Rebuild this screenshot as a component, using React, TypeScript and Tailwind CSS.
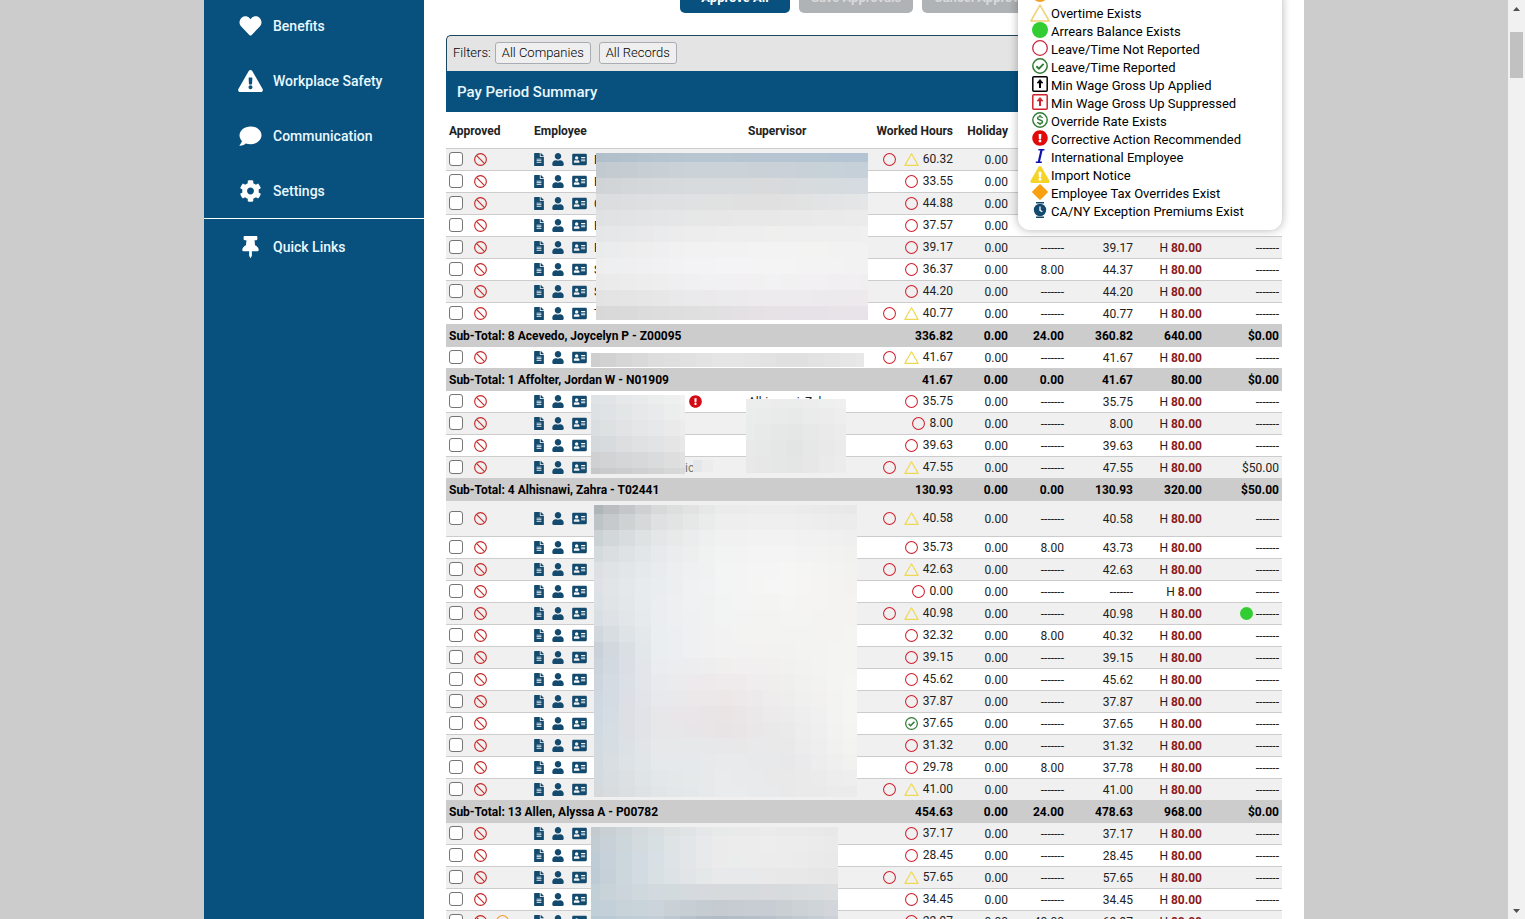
import type { ReactNode } from "react";
import clsx from "clsx";
import {
  FaAddressCard,
  FaCog,
  FaComment,
  FaExclamationCircle,
  FaExclamationTriangle,
  FaFileAlt,
  FaHeart,
  FaThumbtack,
  FaUser,
} from "react-icons/fa";

type Entry = {
  kind: "entry";
  hours: string;
  icons?: "O" | "OT" | "V";
  leave?: string;
  total?: string;
  salary?: string;
  balance?: string;
  arrears?: boolean;
  corrective?: boolean;
  held?: boolean;
  tall?: boolean;
  name?: string;
  nameEnd?: string;
  supervisor?: string;
};

type Subtotal = { kind: "subtotal"; label: string; values: string[] };

const NONE = "-------";
const blank = { leave: "", total: "", salary: "", balance: "" };

const entry = (hours: string, rest: Partial<Entry> = {}): Entry => ({
  kind: "entry",
  hours,
  ...rest,
});

const subtotal = (label: string, ...values: string[]): Subtotal => ({
  kind: "subtotal",
  label,
  values,
});

const rows: (Entry | Subtotal)[] = [
  entry("60.32", { icons: "OT", name: "D", ...blank }),
  entry("33.55", { name: "F", ...blank }),
  entry("44.88", { name: "C", ...blank }),
  entry("37.57", { name: "F", ...blank }),
  entry("39.17", { name: "F" }),
  entry("36.37", { leave: "8.00", total: "44.37", name: "S" }),
  entry("44.20", { name: "S" }),
  entry("40.77", { icons: "OT", name: "T" }),
  subtotal("Sub-Total: 8 Acevedo, Joycelyn P - Z00095", "336.82", "0.00", "24.00", "360.82", "640.00", "$0.00"),
  entry("41.67", { icons: "OT" }),
  subtotal("Sub-Total: 1 Affolter, Jordan W - N01909", "41.67", "0.00", "0.00", "41.67", "80.00", "$0.00"),
  entry("35.75", { corrective: true, supervisor: "Alhisnawi, Zahra" }),
  entry("8.00"),
  entry("39.63"),
  entry("47.55", { icons: "OT", balance: "$50.00", nameEnd: "ic" }),
  subtotal("Sub-Total: 4 Alhisnawi, Zahra - T02441", "130.93", "0.00", "0.00", "130.93", "320.00", "$50.00"),
  entry("40.58", { icons: "OT", tall: true }),
  entry("35.73", { leave: "8.00", total: "43.73" }),
  entry("42.63", { icons: "OT" }),
  entry("0.00", { total: NONE, salary: "8.00" }),
  entry("40.98", { icons: "OT", arrears: true }),
  entry("32.32", { leave: "8.00", total: "40.32" }),
  entry("39.15"),
  entry("45.62"),
  entry("37.87"),
  entry("37.65", { icons: "V" }),
  entry("31.32"),
  entry("29.78", { leave: "8.00", total: "37.78" }),
  entry("41.00", { icons: "OT" }),
  subtotal("Sub-Total: 13 Allen, Alyssa A - P00782", "454.63", "0.00", "24.00", "478.63", "968.00", "$0.00"),
  entry("37.17"),
  entry("28.45"),
  entry("57.65", { icons: "OT" }),
  entry("34.45"),
  entry("22.97", { leave: "40.00", total: "62.97", held: true }),
];

const Ring = ({ className }: { className?: string }) => (
  <svg viewBox="0 0 16 16" fill="none" stroke="currentColor" className={className}>
    <circle cx="8" cy="8" r="7.3" strokeWidth="1.3" />
  </svg>
);

const Dot = ({ className }: { className?: string }) => (
  <svg viewBox="0 0 16 16" fill="currentColor" className={className}>
    <circle cx="8" cy="8" r="8" />
  </svg>
);

const Ban = ({ className }: { className?: string }) => (
  <svg viewBox="0 0 16 16" fill="none" stroke="currentColor" strokeWidth="1.4" className={className}>
    <circle cx="8" cy="8" r="7.2" />
    <path d="M3 3l10 10" />
  </svg>
);

const Warn = ({ className }: { className?: string }) => (
  <svg viewBox="0 0 18 16" fill="none" stroke="currentColor" strokeWidth="1.4" strokeLinejoin="round" className={className}>
    <path d="M9 1L17.200 15.200H.8z" />
  </svg>
);

const Check = ({ className }: { className?: string }) => (
  <svg viewBox="0 0 16 16" fill="none" stroke="currentColor" strokeWidth="1.5" className={className}>
    <circle cx="8" cy="8" r="7.2" />
    <path d="M4.4 8.3l2.5 2.4 4.7-4.8" strokeWidth="1.9" />
  </svg>
);

const BoxUp = ({ className }: { className?: string }) => (
  <svg viewBox="0 0 16 16" fill="none" stroke="currentColor" strokeWidth="1.5" className={className}>
    <rect x="0.8" y="0.8" width="14.4" height="14.4" rx="1" />
    <path d="M8 12V5" strokeWidth="2" />
    <path d="M8 3.4L11 7H5z" fill="currentColor" strokeWidth="0.6" />
  </svg>
);

const Dollar = ({ className }: { className?: string }) => (
  <svg viewBox="0 0 16 16" fill="none" stroke="currentColor" strokeWidth="1.4" className={className}>
    <circle cx="8" cy="8" r="7.2" />
    <path d="M10.4 6C10 5 9.200 4.600 8 4.600c-1.400 0-2.400.6-2.400 1.700 0 2.400 4.900 1 4.900 3.500 0 1.100-1.100 1.700-2.500 1.700-1.300 0-2.200-.5-2.600-1.500M8 3v1.600M8 11.500V13" />
  </svg>
);

const Letter = ({ className }: { className?: string }) => (
  <svg viewBox="0 0 16 16" fill="none" stroke="currentColor" className={className}>
    <path d="M9.600 1.800L6.800 14" strokeWidth="2.200" />
    <path d="M6.400 1.700h6M3.800 14.200h6" strokeWidth="1.400" />
  </svg>
);

const Diamond = ({ className }: { className?: string }) => (
  <svg viewBox="0 0 16 16" fill="currentColor" className={className}>
    <path d="M7.300.5a1 1 0 0 1 1.400 0l6.800 6.800a1 1 0 0 1 0 1.400l-6.800 6.800a1 1 0 0 1-1.400 0L.5 8.700a1 1 0 0 1 0-1.400z" />
  </svg>
);

const Watch = ({ className }: { className?: string }) => (
  <svg viewBox="0 0 16 16" className={className}>
    <path d="M4 0h8v1.400H4zM4 14.600h8V16H4z" fill="currentColor" />
    <circle cx="8" cy="8" r="6.200" fill="currentColor" />
    <path d="M8 4.600V8.300l2.300 1.400" fill="none" stroke="#fff" strokeWidth="1.300" />
  </svg>
);

const legend: { icon: ReactNode; text: string }[] = [
  { icon: <Dot className="size-4 text-[#f0a028]" />, text: "" },
  { icon: <Warn className="h-[18px] w-5 text-[#f0d078]" />, text: "Overtime Exists" },
  { icon: <Dot className="size-4 text-[#32cd32]" />, text: "Arrears Balance Exists" },
  { icon: <Ring className="size-4 text-[#c8283c]" />, text: "Leave/Time Not Reported" },
  { icon: <Check className="size-4 text-[#2e7d32]" />, text: "Leave/Time Reported" },
  { icon: <BoxUp className="size-4 text-black" />, text: "Min Wage Gross Up Applied" },
  { icon: <BoxUp className="size-4 text-[#d0202e]" />, text: "Min Wage Gross Up Suppressed" },
  { icon: <Dollar className="size-4 text-[#2e7d32]" />, text: "Override Rate Exists" },
  { icon: <FaExclamationCircle className="size-4 text-[#e00a0a]" />, text: "Corrective Action Recommended" },
  { icon: <Letter className="size-4 text-[#1010b0]" />, text: "International Employee" },
  { icon: <FaExclamationTriangle className="h-[17px] w-5 text-[#f5d327]" />, text: "Import Notice" },
  { icon: <Diamond className="size-4 text-[#f9a011]" />, text: "Employee Tax Overrides Exist" },
  { icon: <Watch className="size-4 text-[#134a6e]" />, text: "CA/NY Exception Premiums Exist" },
];

const hex = (color: string) => [1, 3, 5].map((i) => parseInt(color.slice(i, i + 2), 16));

// Pixelated cover, blended between the colours of a coarse grid
const Mosaic = ({
  width,
  height,
  colors,
  className,
}: {
  width: number;
  height: number;
  colors: string[][];
  className: string;
}) => {
  const cell = 16;
  const shift = 7;
  const cols = Math.ceil((width + shift) / cell);
  const lines = Math.ceil((height + shift) / cell);
  const pick = (x: number, y: number) => {
    const gx = cols > 1 ? (x / (cols - 1)) * (colors[0].length - 1) : 0;
    const gy = lines > 1 ? (y / (lines - 1)) * (colors.length - 1) : 0;
    const x0 = Math.floor(gx);
    const y0 = Math.floor(gy);
    const x1 = Math.min(x0 + 1, colors[0].length - 1);
    const y1 = Math.min(y0 + 1, colors.length - 1);
    const [a, b, c, d] = [colors[y0][x0], colors[y0][x1], colors[y1][x0], colors[y1][x1]].map(hex);
    const mix = a.map((_, i) => {
      const top = a[i] + (b[i] - a[i]) * (gx - x0);
      const bottom = c[i] + (d[i] - c[i]) * (gx - x0);
      return Math.round(top + (bottom - top) * (gy - y0));
    });
    return `rgb(${mix.join(",")})`;
  };

  return (
    <svg
      aria-hidden="true"
      width={width}
      height={height}
      shapeRendering="crispEdges"
      className={clsx("absolute", className)}
    >
      {Array.from({ length: cols * lines }, (_, i) => {
        const x = i % cols;
        const y = Math.floor(i / cols);
        return (
          <rect key={i} x={x * cell - shift} y={y * cell - shift} width={cell} height={cell} fill={pick(x, y)} />
        );
      })}
    </svg>
  );
};

const NavItem = ({ icon, children }: { icon: ReactNode; children: ReactNode }) => (
  <a href="#" className="flex h-[55px] items-center gap-[10px] pl-[34px] text-sm font-medium text-[#e8f8ff]">
    {icon}
    {children}
  </a>
);

const Sidebar = () => (
  <nav className="-mt-0.5 w-[220px] shrink-0 bg-[#08507d]">
    <NavItem icon={<FaHeart className="h-[22px] w-[25px] text-white" />}>Benefits</NavItem>
    <NavItem icon={<FaExclamationTriangle className="h-[22px] w-[25px] text-white" />}>Workplace Safety</NavItem>
    <NavItem icon={<FaComment className="h-[22px] w-[25px] text-white" />}>Communication</NavItem>
    <NavItem icon={<FaCog className="h-[22px] w-[25px] text-white" />}>Settings</NavItem>
    <div className="border-t border-white">
      <NavItem icon={<FaThumbtack className="h-[22px] w-[25px] text-white" />}>Quick Links</NavItem>
    </div>
  </nav>
);

const Legend = () => (
  <aside className="absolute -top-[13px] right-[22px] w-[264px] rounded-xl bg-white pb-[9px] pl-3 shadow-[0_0_10px_rgba(0,0,0,0.3)]">
    <ul>
      {legend.map(({ icon, text }, i) => (
        <li key={i} className="flex h-[18px] gap-px text-[13px] leading-[18px] text-black">
          <span className="-mt-px flex w-5 shrink-0 items-start justify-center">{icon}</span>
          {text}
        </li>
      ))}
    </ul>
  </aside>
);

const cellClass = "border-t border-[#ccc] px-[3px] py-0 leading-4";

const EntryRow = ({ row, index }: { row: Entry; index: number }) => {
  const icons = row.icons ?? "O";
  const salary = row.salary ?? "80.00";
  return (
    <tr className={clsx("text-right", row.tall ? "h-9" : "h-[22px]", index % 2 === 0 ? "bg-[#f0f0f0]" : "bg-white")}>
      <td className={cellClass}>
        <div className="flex items-center">
          <input
            type="checkbox"
            aria-label={`Approve row ${index + 1}`}
            className="mb-0.5 size-3.5 appearance-none rounded-[3px] border border-[#767676] bg-white"
          />
          <Ban className="ml-[11px] size-[13px] text-[#c62828]" />
          {row.held && <Ring className="ml-[9px] size-[13px] text-[#f0a028]" />}
        </div>
      </td>
      <td className={cellClass}>
        <div className="flex items-center text-[#134a6e]">
          <FaFileAlt className="h-[13px] w-[10px]" />
          <FaUser className="ml-2 h-[13px] w-3" />
          <FaAddressCard className="ml-2 h-[13px] w-[15px]" />
          {row.name && <span className="ml-[7px] text-[#222]">{row.name}</span>}
          {row.nameEnd && <span className="ml-[98px] text-[#777]">{row.nameEnd}</span>}
          {row.corrective && <FaExclamationCircle className="ml-[102px] size-[13px] text-[#d50a14]" />}
        </div>
      </td>
      <td className={clsx(cellClass, "text-left")}>{row.supervisor}</td>
      <td className={cellClass}>
        <div className="flex items-center justify-end">
          {icons !== "V" && <Ring className="h-[13px] w-[15px] text-[#d0202e]" />}
          {icons === "OT" && <Warn className="ml-[7px] h-[13px] w-[15px] text-[#f0d84e]" />}
          {icons === "V" && <Check className="h-[13px] w-[15px] text-[#2e7d32]" />}
          <span className="mb-0.5 ml-1">{row.hours}</span>
        </div>
      </td>
      <td className={cellClass}>0.00</td>
      <td className={cellClass}>{row.leave ?? NONE}</td>
      <td className={cellClass}>{row.total ?? row.hours}</td>
      <td className={cellClass}>
        {salary && (
          <>
            H <b className="font-bold text-[#8b1a1a]">{salary}</b>
          </>
        )}
      </td>
      <td className={cellClass}>
        <div className="flex items-center justify-end gap-[3px]">
          {row.arrears && <Dot className="size-[13px] text-[#32cd32]" />}
          {row.balance ?? NONE}
        </div>
      </td>
    </tr>
  );
};

const SubtotalRow = ({ row }: { row: Subtotal }) => (
  <tr className="h-[22px] bg-[#ccc] text-right font-bold text-black">
    <td colSpan={3} className={clsx(cellClass, "text-left")}>
      {row.label}
    </td>
    {row.values.map((value, i) => (
      <td key={i} className={cellClass}>
        {value}
      </td>
    ))}
  </tr>
);

const SummaryTable = () => (
  <div className="relative">
    <table className="w-full table-fixed border-separate border-spacing-0 text-xs text-[#222]">
      <colgroup>
        <col className="w-[85px]" />
        <col />
        <col className="w-[115px]" />
        <col className="w-[96px]" />
        <col className="w-[55px]" />
        <col className="w-[56px]" />
        <col className="w-[69px]" />
        <col className="w-[69px]" />
        <col className="w-[77px]" />
      </colgroup>
      <thead>
        <tr className="h-9 text-left whitespace-nowrap">
          <th className="px-[3px] pt-0.5">Approved</th>
          <th className="px-[3px] pt-0.5">Employee</th>
          <th className="px-[3px] pt-0.5">Supervisor</th>
          <th className="px-[3px] pt-0.5 text-right">Worked Hours</th>
          <th className="px-[3px] pt-0.5 text-right">Holiday</th>
          <th colSpan={4} />
        </tr>
      </thead>
      <tbody>
        {rows.map((row, i) =>
          row.kind === "entry" ? <EntryRow key={i} row={row} index={i} /> : <SubtotalRow key={i} row={row} />,
        )}
      </tbody>
    </table>

    <Mosaic
      className="top-[41px] left-[150px]"
      width={272}
      height={167}
      colors={[
        ["#b0bfca", "#b8c6d1", "#b6c5d1", "#b3c4d2"],
        ["#cacfd3", "#d3d8db", "#d3d7da", "#cbd5dd"],
        ["#dadcde", "#dfe0e1", "#dfdfdf", "#e3e5e7"],
        ["#e0e2e4", "#e8e8e9", "#ebebeb", "#ededed"],
        ["#e9eaeb", "#f1f1f2", "#f3f3f2", "#f3f2f2"],
        ["#eeeeef", "#f3f3f5", "#f5f4f5", "#f3f2f3"],
        ["#e8e7e8", "#eeedef", "#f1eff1", "#efecef"],
        ["#d9d8d9", "#e0dfe0", "#e6e2e6", "#e8e3e8"],
      ]}
    />
    <Mosaic
      className="top-[241px] left-[145px]"
      width={273}
      height={14}
      colors={[["#cecece", "#dedede", "#e6e6e6", "#dfdfdf", "#e8e8e8"]]}
    />
    <Mosaic
      className="top-[283px] left-[145px]"
      width={94}
      height={79}
      colors={[
        ["#dfe3e5", "#e9eaeb", "#f1f2f1"],
        ["#d9dddf", "#e3e5e6", "#ebebeb"],
        ["#c6c7c9", "#cfd0d1", "#dadada"],
      ]}
    />
    <Mosaic
      className="top-[287px] left-[300px]"
      width={100}
      height={74}
      colors={[
        ["#ededed", "#ebecec", "#f0f0f0"],
        ["#e9eaea", "#e3e5e4", "#ebebeb"],
        ["#e7e7e7", "#e5e5e5", "#ededed"],
      ]}
    />
    <Mosaic className="top-[348px] left-[247px]" width={20} height={12} colors={[["#e4e7e9", "#ececec"]]} />
    <Mosaic
      className="top-[393px] left-[148px]"
      width={263}
      height={292}
      colors={[
        ["#b0b5b8", "#d8d9d9", "#ebebeb", "#ececec", "#e8e8e8"],
        ["#d0d5d8", "#e6e9ea", "#f2f2f2", "#f3f3f3", "#f0f0f0"],
        ["#dfe3e6", "#eaedef", "#f3f4f4", "#f7f7f6", "#f3f2f1"],
        ["#dbe0e4", "#ebeef0", "#f2f3f3", "#f4f4f2", "#f5f3f2"],
        ["#cad0d8", "#eaeef0", "#f3f2f2", "#f2f2f0", "#f4f4f2"],
        ["#ced6df", "#e9eaed", "#efe9ea", "#efefee", "#f5f5f3"],
        ["#d0d9e1", "#e7e6e9", "#e8e2e4", "#ecebeb", "#f5f5f4"],
        ["#d4dbe0", "#e5e9eb", "#e8eaeb", "#e8e8ea", "#f2f2f1"],
        ["#d5d9dc", "#e1e5e7", "#e9ebec", "#e9e9ea", "#ebebeb"],
      ]}
    />
    <Mosaic
      className="top-[715px] left-[145px]"
      width={247}
      height={96}
      colors={[
        ["#c3cbcf", "#d7dddf", "#e8e9e9", "#ebebeb", "#e8e8e8"],
        ["#c0ccd5", "#d7dfe4", "#ececed", "#eeeeee", "#ebebeb"],
        ["#bfcbd4", "#d7dfe4", "#e7e9ea", "#e9e9ea", "#e6e6e6"],
        ["#c5d1d9", "#cfd7dc", "#ced3d7", "#cfd3d7", "#d5d9dc"],
        ["#b8cad6", "#c5cfd7", "#b0bac4", "#bac3cb", "#cbd1d6"],
      ]}
    />
  </div>
);

const PayPeriod = () => (
  <main className="relative min-w-0 flex-1 bg-white px-[22px]">
    <div className="-mt-[17px] flex justify-center gap-[9px] text-[13px] font-bold whitespace-nowrap">
      <button className="h-[30px] w-[110px] rounded-[5px] bg-[#08507d] text-white">Approve All</button>
      <button disabled className="h-[30px] w-[114px] rounded-[5px] bg-[#b0b3b6] text-[#d8dadc]">
        Save Approvals
      </button>
      <button disabled className="h-[30px] w-[126px] rounded-[5px] bg-[#b0b3b6] text-[#d8dadc]">
        Cancel Approvals
      </button>
    </div>

    <div className="mt-[22px] flex h-9 items-center rounded-t-[5px] border-t border-l border-[#1d4560] bg-[#e4e4e4] pb-0.5 pl-1.5 text-[13px] font-light text-black">
      Filters:
      <button className="ml-1 h-[22px] rounded-[3px] border border-[#a9adb3] bg-[#efefef] px-1.5">All Companies</button>
      <button className="ml-2 h-[22px] rounded-[3px] border border-[#a9adb3] bg-[#efefef] px-1.5">All Records</button>
    </div>
    <h2 className="flex h-[41px] items-center bg-[#08507d] pt-0.5 pl-[11px] text-[15px] font-medium text-[#e8f8ff]">
      Pay Period Summary
    </h2>
    <SummaryTable />
    <Legend />
  </main>
);

const Scrollbar = () => (
  <div aria-hidden="true" className="flex w-[17px] shrink-0 flex-col items-center bg-[#f1f1f1]">
    <svg viewBox="0 0 17 17" className="size-[17px] fill-[#505050]">
      <path d="M5 11h7L8.500 7z" />
    </svg>
    <div className="mt-[15px] h-[46px] w-[13px] bg-[#c1c1c1]" />
    <svg viewBox="0 0 17 17" className="mt-auto size-[17px] fill-[#505050]">
      <path d="M5 7h7l-3.500 4z" />
    </svg>
  </div>
);

const App = () => (
  <div className="flex h-screen overflow-hidden bg-[#ccc] font-['Roboto',sans-serif]">
    <div className="min-w-0 flex-1 overflow-hidden">
      <div className="mx-auto flex w-full max-w-[1100px]">
        <Sidebar />
        <PayPeriod />
      </div>
    </div>
    <Scrollbar />
  </div>
);

export default App;
